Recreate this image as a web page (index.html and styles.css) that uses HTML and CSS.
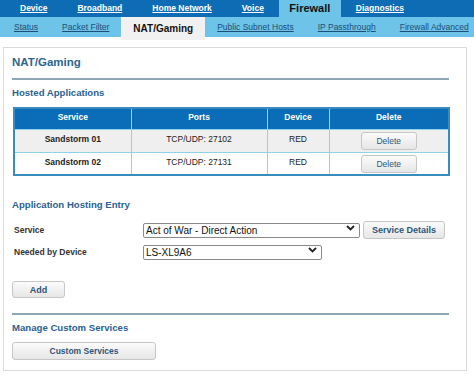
FILE: index.html
```html
<!DOCTYPE html>
<html>
<head>
<meta charset="utf-8">
<link rel="stylesheet" href="styles.css">
</head>
<body>
<nav class="topnav">
  <a class="tlink" href="#">Device</a>
  <a class="tlink" href="#">Broadband</a>
  <a class="tlink" href="#">Home Network</a>
  <a class="tlink" href="#">Voice</a>
  <span class="ttab">Firewall</span>
  <a class="tlink" href="#">Diagnostics</a>
</nav>
<nav class="subnav">
  <a class="slink" href="#">Status</a>
  <a class="slink" href="#">Packet Filter</a>
  <span class="stab">NAT/Gaming</span>
  <a class="slink" href="#">Public Subnet Hosts</a>
  <a class="slink" href="#">IP Passthrough</a>
  <a class="slink" href="#">Firewall Advanced</a>
</nav>
<main class="panel">
  <h1 class="title">NAT/Gaming</h1>
  <div class="rule"></div>
  <h2 class="sect first">Hosted Applications</h2>
  <table class="apps">
    <thead>
      <tr><th class="c1">Service</th><th class="c2">Ports</th><th class="c3">Device</th><th class="c4">Delete</th></tr>
    </thead>
    <tbody>
      <tr class="odd"><td class="svc">Sandstorm 01</td><td>TCP/UDP: 27102</td><td>RED</td><td><button class="btn del">Delete</button></td></tr>
      <tr><td class="svc">Sandstorm 02</td><td>TCP/UDP: 27131</td><td>RED</td><td><button class="btn del">Delete</button></td></tr>
    </tbody>
  </table>
  <h2 class="sect entry">Application Hosting Entry</h2>
  <div class="form">
    <label class="lbl">Service</label>
    <div class="field">
      <div class="selwrap wide">
        <select class="sel"><option>Act of War - Direct Action</option></select>
        <svg class="chev" width="9" height="6" viewBox="0 0 9 6"><path d="M1 1 L4.5 4.5 L8 1" fill="none" stroke="#222" stroke-width="1.8"/></svg>
      </div>
      <button class="btn details">Service Details</button>
    </div>
    <label class="lbl">Needed by Device</label>
    <div class="field">
      <div class="selwrap narrow">
        <select class="sel"><option>LS-XL9A6</option></select>
        <svg class="chev" width="9" height="6" viewBox="0 0 9 6"><path d="M1 1 L4.5 4.5 L8 1" fill="none" stroke="#222" stroke-width="1.8"/></svg>
      </div>
    </div>
  </div>
  <button class="btn add">Add</button>
  <div class="rule rule2"></div>
  <h2 class="sect manage">Manage Custom Services</h2>
  <button class="btn custom">Custom Services</button>
</main>
</body>
</html>
```
FILE: styles.css
```css
* { box-sizing: border-box; }
body {
  margin: 0;
  background: #ffffff;
  font-family: "Liberation Sans", Arial, sans-serif;
  width: 474px;
  height: 386px;
  overflow: hidden;
}
.topnav {
  display: flex;
  align-items: stretch;
  height: 17px;
  background: #0d6cb4;
  padding-left: 5px;
  white-space: nowrap;
}
.tlink {
  flex-shrink: 0;
  color: #ffffff;
  font-size: 8.5px;
  font-weight: bold;
  padding: 0 15px;
  line-height: 17px;
  text-decoration: underline;
}
.ttab {
  flex-shrink: 0;
  background: #6dc3e8;
  color: #111;
  font-size: 11px;
  font-weight: bold;
  line-height: 17px;
  padding: 0 10.5px;
}
.subnav {
  display: flex;
  align-items: flex-start;
  height: 20px;
  background: #6dc3e8;
  padding-left: 2px;
  white-space: nowrap;
}
.slink {
  flex-shrink: 0;
  color: #1d4e78;
  font-size: 8.5px;
  padding: 0 12px;
  line-height: 20px;
  text-decoration: underline;
}
.stab {
  flex-shrink: 0;
  background: #f1f1f1;
  color: #111;
  font-size: 10px;
  font-weight: bold;
  height: 23px;
  line-height: 23px;
  padding: 0 12px;
}
.panel {
  margin: 10px 0 0 3px;
  width: 464px;
  height: 324px;
  border: 1px solid #d9d9d9;
  padding: 5px 17px 0 8px;
}
.title {
  margin: 0;
  font-size: 11.5px;
  line-height: 18px;
  color: #2b668f;
  font-weight: bold;
}
.rule {
  margin-top: 7px;
  height: 2px;
  background: #8ea7b4;
}
.sect {
  margin: 0;
  font-size: 9.6px;
  line-height: 15px;
  color: #2a6293;
  font-weight: bold;
}
.sect.first { margin-top: 5px; }
.apps {
  margin-top: 7px;
  margin-left: 1px;
  width: 435px;
  border-collapse: collapse;
  border: 2px solid #3a8cbc;
  font-size: 8.5px;
  table-layout: fixed;
}
.apps th {
  background: #0b6cb7;
  color: #fff;
  font-weight: bold;
  height: 21px;
  padding: 3px 0 0;
  vertical-align: top;
  border: 1px solid #8fd2ec;
  border-top: none;
}
.c1 { width: 117px; }
.c2 { width: 136px; }
.c3 { width: 62px; }
.c4 { width: 120px; }
.apps td {
  height: 23px;
  text-align: center;
  vertical-align: top;
  padding: 4px 0 0;
  color: #222;
  border: 1px solid #8fd2ec;
}
.apps tr.odd td { background: #efefef; }
.apps td.svc { font-weight: bold; }
.btn {
  font-family: "Liberation Sans", Arial, sans-serif;
  background: linear-gradient(#fbfbfb, #e6e6e6);
  border: 1px solid #c6c6c6;
  border-radius: 3px;
  color: #2d5779;
  font-size: 9px;
  padding: 0;
  display: block;
}
.del {
  width: 56px;
  height: 18px;
  margin: -2px auto 0;
  font-weight: normal;
  font-size: 8.5px;
}
.sect.entry { margin-top: 21px; }
.form {
  display: grid;
  grid-template-columns: 131px auto;
  row-gap: 3px;
  margin-top: 8px;
}
.lbl {
  font-size: 8.5px;
  font-weight: bold;
  color: #333;
  padding-left: 2px;
  padding-top: 4px;
  line-height: 12px;
}
.field {
  display: flex;
  align-items: flex-start;
}
.selwrap {
  position: relative;
  height: 15px;
}
.selwrap.wide { width: 217px; }
.selwrap.narrow { width: 179px; }
.sel {
  appearance: none;
  -webkit-appearance: none;
  width: 100%;
  height: 15px;
  border: 1px solid #8a8a8a;
  border-radius: 2px;
  background: #fff;
  font-family: "Liberation Sans", Arial, sans-serif;
  font-size: 10px;
  color: #111;
  padding: 0 0 0 2px;
  line-height: 13px;
}
.chev {
  position: absolute;
  right: 5px;
  top: 5px;
}
.details {
  margin-left: 3px;
  margin-top: 1px;
  width: 82px;
  height: 18px;
  font-weight: bold;
}
.add {
  margin-top: 23px;
  width: 53px;
  height: 17px;
  font-weight: bold;
}
.rule2 { margin-top: 15px; }
.sect.manage { margin-top: 5px; }
.custom {
  margin-top: 7px;
  width: 144px;
  height: 18px;
  font-weight: bold;
  font-size: 8.5px;
}
```
